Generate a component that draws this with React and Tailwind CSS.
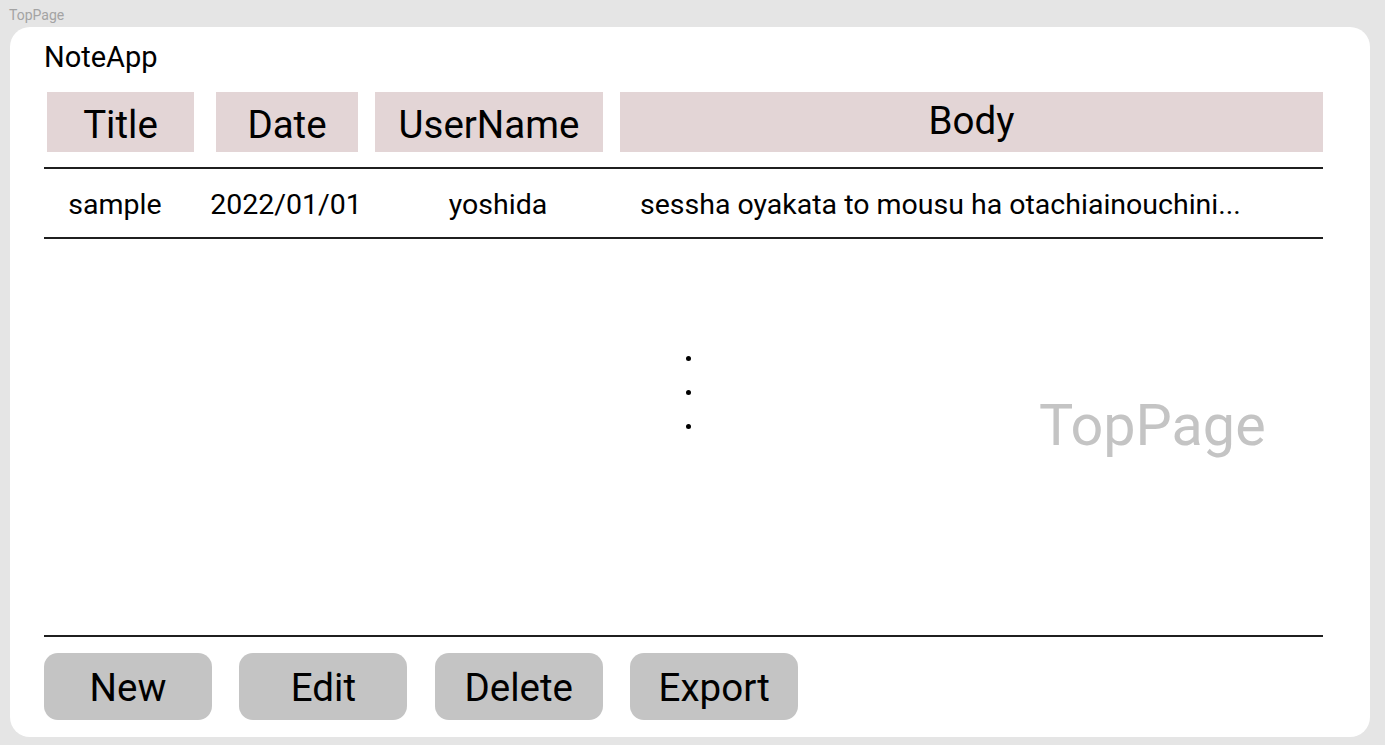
const headers = [
  { label: "Title", cls: "w-[147px] pt-[6px]" },
  { label: "Date", cls: "w-[142px] ml-[5px] pt-[6px]" },
  { label: "UserName", cls: "w-[228px] pt-[7px]" },
  { label: "Body", cls: "w-[703px] pb-[1px]" },
];

const buttons = ["New", "Edit", "Delete", "Export"];

export default function App() {
  return (
    <div
      className="h-[745px] w-full bg-[#e5e5e5] overflow-hidden"
      style={{ fontFamily: "Roboto, 'Noto Sans', sans-serif" }}
    >
      {/* frame label */}
      <div className="h-[27px] pl-[9px] pt-[8px] text-[14px] leading-none text-[#a3a3a3]">
        TopPage
      </div>

      <div className="ml-[10px] w-[1360px] h-[710px] bg-white rounded-[20px] pl-[34px] pr-[47px] flex flex-col">
        <div className="mt-[16px] h-[28px] text-[29px] leading-none text-black">
          NoteApp
        </div>

        {/* header cells */}
        <div className="mt-[21px] ml-[3px] flex h-[60px] gap-[17px]">
          {headers.map((h) => (
            <div
              key={h.label}
              className={`${h.cls} bg-[#e3d5d6] flex items-center justify-center text-[38.5px] leading-none text-black`}
            >
              {h.label}
            </div>
          ))}
        </div>

        <div className="mt-[15px] h-[2px] bg-[#1f1f1f]" />

        {/* data row */}
        <div className="h-[68px] pt-[4px] flex items-center text-[28.5px] leading-none text-black">
          <div className="w-[142px] text-center">sample</div>
          <div className="w-[200px] text-center">2022/01/01</div>
          <div className="w-[224px] text-center">yoshida</div>
          <div className="pl-[30px]">sessha oyakata to mousu ha otachiainouchini...</div>
        </div>

        <div className="h-[2px] bg-[#1f1f1f]" />

        {/* placeholder area */}
        <div className="relative h-[396px]">
          <div className="ml-[642px] pt-[117px] flex flex-col gap-[29px]">
            <div className="w-[5px] h-[5px] rounded-full bg-black" />
            <div className="w-[5px] h-[5px] rounded-full bg-black" />
            <div className="w-[5px] h-[5px] rounded-full bg-black" />
          </div>
          <div className="absolute left-[995px] top-[158px] text-[57.5px] leading-none text-[#c4c4c4]">
            TopPage
          </div>
        </div>

        <div className="h-[2px] bg-[#1f1f1f]" />

        {/* actions */}
        <div className="mt-[16px] flex gap-[27.4px]">
          {buttons.map((b) => (
            <button
              key={b}
              className="w-[168px] h-[67px] pt-[3px] rounded-[14px] bg-[#c4c4c4] flex items-center justify-center text-[38.5px] leading-none text-black"
            >
              {b}
            </button>
          ))}
        </div>
      </div>
    </div>
  );
}
